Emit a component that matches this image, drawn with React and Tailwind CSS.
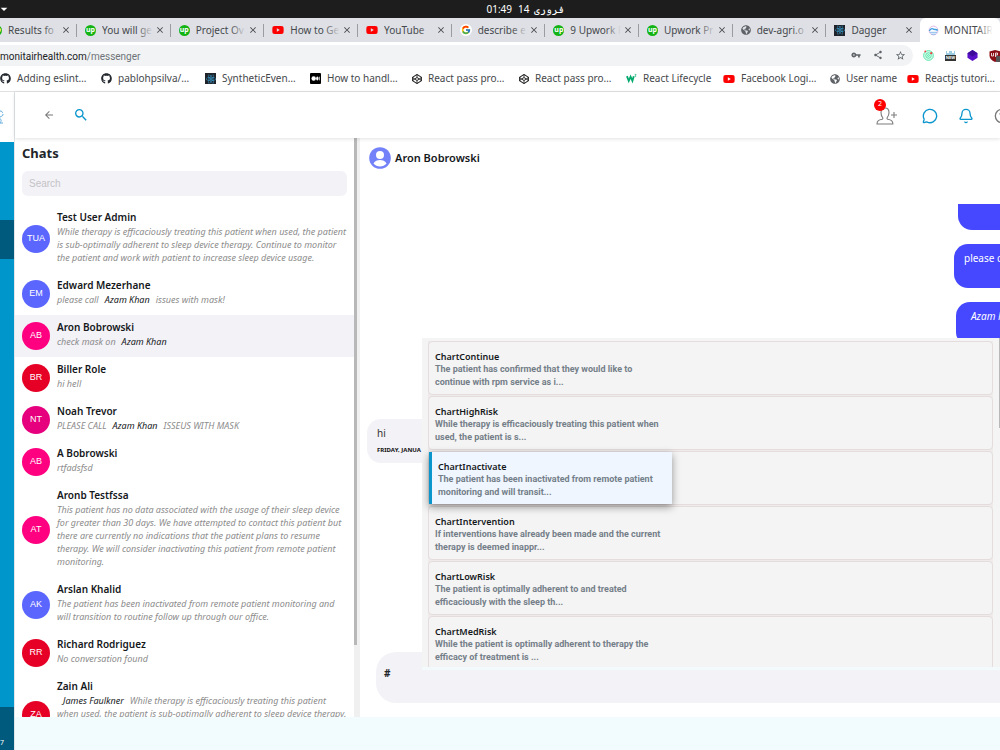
import { useState } from 'react'
import { MessageCircle, Bell, CircleHelp } from 'lucide-react'
import { FaGithub, FaYoutube, FaCodepen, FaReact, FaGlobeAmericas } from 'react-icons/fa'
import { FcGoogle } from 'react-icons/fc'
import { MdVpnKey, MdShare, MdStarBorder, MdArrowBack, MdSearch, MdClose, MdArrowDropDown } from 'react-icons/md'

const TABS = [
  { icon: 'upwork', title: 'Results fo' },
  { icon: 'upwork', title: 'You will ge' },
  { icon: 'upwork', title: 'Project Ov' },
  { icon: 'youtube', title: 'How to Ge' },
  { icon: 'youtube', title: 'YouTube' },
  { icon: 'google', title: 'describe e' },
  { icon: 'upwork', title: '9 Upwork F' },
  { icon: 'upwork', title: 'Upwork Pr' },
  { icon: 'globe', title: 'dev-agri.o' },
  { icon: 'react', title: 'Dagger' },
]

const BOOKMARKS = [
  { icon: 'github', title: 'Adding eslint…', width: 'w-[101px]' },
  { icon: 'github', title: 'pablohpsilva/…', width: 'w-[104px]' },
  { icon: 'react', title: 'SyntheticEven…', width: 'w-[105px]' },
  { icon: 'medium', title: 'How to handl…', width: 'w-[102px]' },
  { icon: 'codepen', title: 'React pass pro…', width: 'w-[107px]' },
  { icon: 'codepen', title: 'React pass pro…', width: 'w-[107px]' },
  { icon: 'w3', title: 'React Lifecycle', width: 'w-[97px]' },
  { icon: 'youtube', title: 'Facebook Logi…', width: 'w-[107px]' },
  { icon: 'globe', title: 'User name', width: 'w-[77px]' },
  { icon: 'youtube', title: 'Reactjs tutori…', width: 'w-[93px]' },
]

// Message parts: plain strings are text, objects are mentions, one array per line
const CHATS = [
  {
    initials: 'TUA', name: 'Test User Admin', color: 'bg-[#5b66ff]',
    lines: [
      ['While therapy is efficaciously treating this patient when used, the patient'],
      ['is sub-optimally adherent to sleep device therapy. Continue to monitor'],
      ['the patient and work with patient to increase sleep device usage.'],
    ],
  },
  { initials: 'EM', name: 'Edward Mezerhane', color: 'bg-[#5b66ff]', lines: [['please call', { mention: 'Azam Khan' }, 'issues with mask!']] },
  { initials: 'AB', name: 'Aron Bobrowski', color: 'bg-[#ff0080]', active: true, lines: [['check mask on', { mention: 'Azam Khan' }]] },
  { initials: 'BR', name: 'Biller Role', color: 'bg-[#e60026]', lines: [['hi hell']] },
  { initials: 'NT', name: 'Noah Trevor', color: 'bg-[#e6007e]', lines: [['PLEASE CALL', { mention: 'Azam Khan' }, 'ISSEUS WITH MASK']] },
  { initials: 'AB', name: 'A Bobrowski', color: 'bg-[#ff0080]', lines: [['rtfadsfsd']] },
  {
    initials: 'AT', name: 'Aronb Testfssa', color: 'bg-[#ff0080]',
    lines: [
      ['This patient has no data associated with the usage of their sleep device'],
      ['for greater than 30 days. We have attempted to contact this patient but'],
      ['there are currently no indications that the patient plans to resume'],
      ['therapy. We will consider inactivating this patient from remote patient'],
      ['monitoring.'],
    ],
  },
  {
    initials: 'AK', name: 'Arslan Khalid', color: 'bg-[#5b66ff]',
    lines: [
      ['The patient has been inactivated from remote patient monitoring and'],
      ['will transition to routine follow up through our office.'],
    ],
  },
  { initials: 'RR', name: 'Richard Rodriguez', color: 'bg-[#e60026]', lines: [['No conversation found']] },
  {
    initials: 'ZA', name: 'Zain Ali', color: 'bg-[#e60026]',
    lines: [
      [{ mention: 'James Faulkner' }, 'While therapy is efficaciously treating this patient'],
      ['when used, the patient is sub-optimally adherent to sleep device therapy.'],
      ['Continue to monitor the patient and work with patient to increase'],
      ['sleep device usage.'],
    ],
  },
]

const TEMPLATES = [
  { title: 'ChartContinue', lines: ['The patient has confirmed that they would like to', 'continue with rpm service as i...'] },
  { title: 'ChartHighRisk', lines: ['While therapy is efficaciously treating this patient when', 'used, the patient is s...'] },
  { title: 'ChartInactivate', lines: ['The patient has been inactivated from remote patient', 'monitoring and will transit...'] },
  { title: 'ChartIntervention', lines: ['If interventions have already been made and the current', 'therapy is deemed inappr...'] },
  { title: 'ChartLowRisk', lines: ['The patient is optimally adherent to and treated', 'efficaciously with the sleep th...'] },
  { title: 'ChartMedRisk', lines: ['While the patient is optimally adherent to therapy the', 'efficacy of treatment is ...'] },
]

function SiteIcon({ name }) {
  switch (name) {
    case 'github':
      return <FaGithub className="size-[11px] shrink-0 text-[#24292f]" />
    case 'youtube':
      return <FaYoutube className="size-3 shrink-0 text-[#ff0000]" />
    case 'codepen':
      return <FaCodepen className="size-[10px] shrink-0 text-[#222]" />
    case 'google':
      return <span className="flex size-3 shrink-0 items-center justify-center rounded-full bg-white"><FcGoogle className="size-[10px]" /></span>
    case 'globe':
      return <FaGlobeAmericas className="size-[10px] shrink-0 text-[#5f6368]" />
    case 'react':
      return <span className="flex size-[11px] shrink-0 items-center justify-center bg-[#20232a]"><FaReact className="size-[10px] text-[#3aa5d8]" /></span>
    case 'medium':
      return (
        <svg viewBox="0 0 12 12" className="size-[11px] shrink-0">
          <rect width="12" height="12" rx="1" fill="#000" />
          <circle cx="4" cy="6" r="2.4" fill="#fff" />
          <ellipse cx="8" cy="6" rx="1.3" ry="2.3" fill="#fff" />
          <rect x="10" y="4" width="0.7" height="4" fill="#fff" />
        </svg>
      )
    case 'w3':
      return (
        <svg viewBox="0 0 12 12" className="size-[11px] shrink-0" fill="none" stroke="#04aa6d">
          <path d="M1 3.5l2 5 2-4.500 2 4.500 1.500-5" strokeWidth="2" />
          <path d="M9.5 1.5h1.5l-1 1.2c1.3 0 1.2 1.6-.4 1.3" strokeWidth="0.7" />
        </svg>
      )
    default:
      return <span className="flex size-[11px] shrink-0 items-center justify-center rounded-full bg-[#14b314] pb-px text-[7px] font-bold leading-none text-white">up</span>
  }
}

function Tab({ icon, title, className }) {
  return (
    <div className={`flex h-[13px] items-center border-r border-[#9a9ca0] pl-2 pr-[5px] ${className}`}>
      <SiteIcon name={icon} />
      <span className="relative ml-[6px] min-w-0 flex-1 overflow-hidden whitespace-nowrap leading-[13px]">
        {title}
        <span className="absolute inset-y-0 right-0 w-4 bg-gradient-to-r from-transparent to-[#dee0e6]" />
      </span>
      <button aria-label="Close tab" className="ml-[2px]"><MdClose className="size-[10px] text-[#45484c]" /></button>
    </div>
  )
}

function BrowserChrome() {
  return (
    <header className="shrink-0 font-['Noto_Sans','Liberation_Sans',sans-serif] text-[10px] text-[#45484c]">
      <div className="relative flex h-[18px] items-center justify-center bg-[#1d1d1d] text-white">
        <MdArrowDropDown className="absolute -left-[4px] size-4" />
        <span className="ml-[50px] flex gap-[6px] text-[10px]"><span>01:49</span><span>14</span><span className="-ml-[2px]" dir="rtl" lang="ur">فروری</span></span>
      </div>

      {/* Tabs */}
      <div className="flex h-6 items-center overflow-hidden bg-[#dee0e6]">
        {TABS.map((tab, i) => (
          <Tab key={i} {...tab} className={i === 0 ? '-ml-[17px] w-[94px] shrink-0' : i === 9 ? 'min-w-0 flex-1 border-transparent' : 'min-w-0 flex-1'} />
        ))}
        <div className="flex h-full w-20 shrink-0 items-center gap-[5px] overflow-hidden rounded-t-md bg-white pl-2">
          <svg viewBox="0 0 12 12" className="size-[11px] shrink-0" fill="none">
            <circle cx="6" cy="6" r="4.800" stroke="#dcb4e4" />
            <path d="M1.500 6.500c1-2.500 3-3 4.500-2s3-.5 4.500 1.500" stroke="#3d9fe0" strokeWidth="1.500" />
            <path d="M2 8h8M3.500 10h5" stroke="#7cb8ea" />
          </svg>
          <span className="relative shrink-0 whitespace-nowrap">
            MONITAIR
            <span className="absolute inset-y-0 right-0 w-4 bg-gradient-to-r from-transparent to-white" />
          </span>
        </div>
      </div>

      {/* Address bar */}
      <div className="flex h-6 items-center gap-[10px] overflow-hidden bg-white">
        <div className="mt-[3px] flex h-[21px] min-w-0 flex-1 items-center rounded-r-full bg-[#f1f3f4] pr-[7px]">
          <span className="flex-1 pt-px font-['Roboto','Noto_Sans',sans-serif] text-[#202124]">monitairhealth.com<span className="text-[#6f7378]">/messenger</span></span>
          <span className="flex gap-3 text-[#5f6368]">
            <MdVpnKey className="size-[10px]" />
            <MdShare className="size-[10px]" />
            <MdStarBorder className="size-[11px]" />
          </span>
        </div>
        <div className="mt-[3px] flex w-[77px] shrink-0 items-center gap-[11px]">
          <svg viewBox="0 0 12 12" className="size-[11px] shrink-0" fill="none" stroke="#4be3a4">
            <circle cx="6" cy="6" r="5.300" fill="#d9fbec" />
            <circle cx="6" cy="6" r="3" />
            <circle cx="6" cy="6" r="1" />
            <circle cx="9" cy="3.500" r="1.200" fill="#f04040" stroke="none" />
            <circle cx="2.500" cy="1.500" r="1" fill="#f04040" stroke="none" />
          </svg>
          <span className="flex h-[11px] w-[11px] shrink-0 flex-col items-center">
            <svg viewBox="0 0 11 5" className="h-[5px] w-[11px]"><path d="M1 2h1M4 2h3M9 2h1M1 4h9" stroke="#3b9ac4" /></svg>
            <span className="w-[11px] bg-[#333] text-center text-[4px] font-bold leading-[6px] text-white">NEW</span>
          </span>
          <svg viewBox="0 0 12 12" className="size-[11px] shrink-0"><path d="M6 0l5.500 3.500v5l-5.500 3.500-5.500-3.500v-5z" fill="#5a0fc8" /><path d="M6 0l5.500 3.500-5.500 3.500-5.500-3.500z" fill="#3d0d99" /></svg>
          <svg viewBox="0 0 12 12" className="size-[12px] shrink-0">
            <path d="M6 0l5.500 1.500v4c0 3-2 5-5.500 6.500-3.500-1.500-5.500-3.500-5.500-6.500v-4z" fill="#8a1016" />
            <path d="M2.500 3v3h2V3M6.500 7V3h2v2h-2" fill="none" stroke="#fff" strokeWidth="0.800" />
            <rect x="7" y="6" width="5" height="6" fill="#555" />
          </svg>
        </div>
      </div>

      {/* Bookmarks */}
      <div className="flex h-[26px] items-center overflow-hidden border-b border-[#dfe1e3] bg-white">
        {BOOKMARKS.map((item, i) => (
          <a key={i} href="#bookmark" className={`flex shrink-0 items-center gap-[6px] whitespace-nowrap ${item.width}`}>
            <SiteIcon name={item.icon} />
            {item.title}
          </a>
        ))}
      </div>
    </header>
  )
}

function AppHeader() {
  return (
    <div className="relative z-10 flex h-[46px] shrink-0 items-center bg-white pl-[28px] shadow-[0_1px_4px_rgba(0,0,0,0.12)]">
      <button aria-label="Back"><MdArrowBack className="size-3 text-[#777]" /></button>
      <button aria-label="Search" className="ml-[18px]"><MdSearch className="size-4 text-[#0a95cd]" /></button>
      <div className="-mr-[10px] ml-auto flex items-center pt-px">
        <button aria-label="Friend requests" className="relative mr-6">
          <svg viewBox="0 0 22 18" className="h-[18px] w-[22px]" fill="none" stroke="#7d7d7d" strokeWidth="1.100">
            <path d="M1 17c0-3.500 2-4 5-4.700 1-.3 1-1 .6-1.800C5.300 9 5 7.500 5 5.500 5 2.500 6.500 1 9 1s4 1.500 4 4.500c0 2-.5 3.500-1.700 5-.5.8-.4 1.500.6 1.800 3 .7 5 1.200 5 4.700z" />
            <path d="M15 8h6M18 5v6" />
          </svg>
          <span className="absolute -left-[2px] -top-2 flex size-3 items-center justify-center rounded-full bg-[#ff0000] text-[7px] text-white">2</span>
        </button>
        <button aria-label="Messages" className="mr-5"><MessageCircle className="size-4 text-[#0a95cd]" strokeWidth={2} /></button>
        <button aria-label="Notifications" className="mr-5"><Bell className="size-4 text-[#0a95cd]" strokeWidth={2} /></button>
        <button aria-label="Help"><CircleHelp className="size-4 text-[#777]" strokeWidth={2} /></button>
      </div>
    </div>
  )
}

function ChatRow({ chat }) {
  return (
    <li>
      <button className={`flex w-full items-center gap-[7px] pl-[7px] text-left ${chat.active ? 'bg-[#f3f2f7]' : ''}`}>
        <span className={`flex size-7 shrink-0 items-center justify-center rounded-full font-['Liberation_Sans',sans-serif] text-[9px] text-white ${chat.color}`}>
          {chat.initials}
        </span>
        <span className="block min-w-0 pb-[9px] pt-1">
          <span className="block text-[10px] font-semibold leading-4 text-[#15181b]">{chat.name}</span>
          {chat.lines.map((line, i) => (
            <span key={i} className="block whitespace-nowrap text-[9px] italic leading-[13px] text-[#8c8c8c]">
              {line.map((part, j) =>
                part.mention ? <span key={j} className="mx-[6px] text-[#15181b]">{part.mention}</span> : <span key={j}>{part}</span>
              )}
            </span>
          ))}
        </span>
      </button>
    </li>
  )
}

function ChatList() {
  return (
    <aside className="flex w-[345px] shrink-0 overflow-hidden bg-[#f0f0f0]">
      <div className="flex min-w-0 flex-1 flex-col bg-white">
        <h2 className="pl-[7px] pt-[5px] text-[13px] font-bold leading-5 text-[#22262a]">Chats</h2>
        <input
          type="text"
          aria-label="Search chats"
          placeholder="Search"
          className="mx-[7px] mt-2 h-[25px] shrink-0 rounded-md bg-[#f3f2f7] px-[7px] font-['Liberation_Sans',sans-serif] text-[10px] outline-none placeholder:text-[#c3c3c6]"
        />
        <ul className="mt-[9px]">
          {CHATS.map((chat, i) => <ChatRow key={i} chat={chat} />)}
        </ul>
      </div>
      <div className="h-[507px] w-[3px] bg-[#b8b8b8]" />
      <div className="w-[3px]" />
    </aside>
  )
}

function TemplateMenu({ selected, onSelect }) {
  return (
    <div className="absolute bottom-[47px] left-[62px] right-0 h-[332px] overflow-hidden border-b-[3px] border-[#f2fafc] bg-[#f4f4f4] pl-[6px] pr-[7px] pt-[3px]">
      <div className="absolute right-0 top-0 h-[90px] w-px bg-[#b8b8b8]" />
      <ul className="flex flex-col gap-px bg-[#efebeb]">
        {TEMPLATES.map((item, i) => (
          <li key={item.title} className="h-[54px] rounded-[4px] border border-[#e4dcdd] bg-[#f4f4f4]">
            <button
              onClick={() => onSelect(i)}
              className={`relative block h-[52px] w-[243px] pb-px pt-1 text-left ${i === selected ? 'border-l-[3px] border-[#0a95cd] bg-[#eff6ff] pl-[6px] shadow-[0_3px_8px_rgba(0,0,0,0.4)]' : 'pl-[6px]'}`}
            >
              <span className="block text-[9px] font-semibold leading-[13px] text-[#15181b]">{item.title}</span>
              {item.lines.map((line) => (
                <span key={line} className="block whitespace-nowrap font-['Roboto','Noto_Sans',sans-serif] text-[9px] font-bold leading-[13px] text-[#747f89]">{line}</span>
              ))}
            </button>
          </li>
        ))}
      </ul>
    </div>
  )
}

function Conversation() {
  const [selected, setSelected] = useState(2)
  const [draft, setDraft] = useState('#')

  return (
    <main className="relative flex min-w-0 flex-1 flex-col overflow-hidden bg-white">
      <div className="flex h-[66px] shrink-0 items-start gap-[4px] pl-[9px] pt-[9px]">
        <svg viewBox="0 0 22 22" className="size-[22px]">
          <circle cx="11" cy="11" r="10.800" fill="#7382f8" />
          <circle cx="11" cy="8" r="4" fill="#fff" />
          <path d="M4.500 16.500c1-2.500 4-3.500 6.500-3.500s5.500 1 6.500 3.500c-1.500 2-4 3-6.500 3s-5-1-6.500-3z" fill="#fff" />
        </svg>
        <h1 className="text-[11px] font-semibold leading-[22px] text-[#15181b]">Aron Bobrowski</h1>
      </div>

      {/* Messages */}
      <div className="flex min-h-0 flex-1 flex-col overflow-hidden text-[10px]">
        <div className="h-[26px] w-[42px] shrink-0 self-end rounded-bl-[14px] bg-[#4548ff]" />
        <div className="mt-[14px] h-11 w-[46px] shrink-0 self-end overflow-hidden whitespace-nowrap rounded-l-[14px] bg-[#4548ff] pl-[10px] pt-[7px] text-white">please ca</div>
        <div className="mt-[14px] h-11 w-11 shrink-0 self-end overflow-hidden whitespace-nowrap rounded-l-[14px] bg-[#4548ff] pl-[15px] pt-[7px] italic text-white">Azam K</div>
        <div className="ml-[7px] mt-[73px] h-11 w-[120px] shrink-0 rounded-[14px] bg-[#f3f2f7] pl-[10px] pt-[6px]">
          <p className="leading-4 text-[#333]">hi</p>
          <p className="mt-[3px] whitespace-nowrap text-[6px] font-bold leading-3 text-[#111]">FRIDAY, JANUA</p>
        </div>
      </div>

      <textarea
        aria-label="Message"
        value={draft}
        onChange={(e) => setDraft(e.target.value)}
        className="mb-[14px] ml-4 h-[51px] shrink-0 resize-none rounded-l-[20px] bg-[#f3f2f7] px-2 pt-[13px] text-[10px] font-bold leading-4 text-[#22262a] outline-none"
      />
      <TemplateMenu selected={selected} onSelect={setSelected} />
    </main>
  )
}

function SideNav() {
  return (
    <nav className="flex w-[15px] shrink-0 flex-col overflow-hidden border-r border-[#dfe5e8] bg-[#0096cc]">
      <div className="flex h-[50px] items-center bg-white">
        <svg viewBox="0 0 4 16" className="h-4 w-1" fill="none" stroke="#5eaadb"><path d="M0 2c2 0 2.500 1 2.500 2M0 8c2-1 3-1 3-3M0 10c2 0 1 3 0 4h3" /></svg>
      </div>
      <div className="mt-[78px] h-[39px] bg-[#005a7d]" />
      <div className="mt-auto flex h-[43px] items-end bg-[#005a7d] pb-[2px] text-[7px] leading-[10px] text-white">7</div>
    </nav>
  )
}

function App() {
  return (
    <div className="flex h-screen flex-col overflow-hidden bg-[#f2fbfd] font-['Noto_Sans','Liberation_Sans',sans-serif]">
      <BrowserChrome />
      <div className="flex min-h-0 flex-1">
        <SideNav />
        <div className="flex min-w-0 flex-1 flex-col pb-[33px]">
          <AppHeader />
          <div className="flex min-h-0 flex-1">
            <ChatList />
            <Conversation />
          </div>
        </div>
      </div>
    </div>
  )
}

export default App
